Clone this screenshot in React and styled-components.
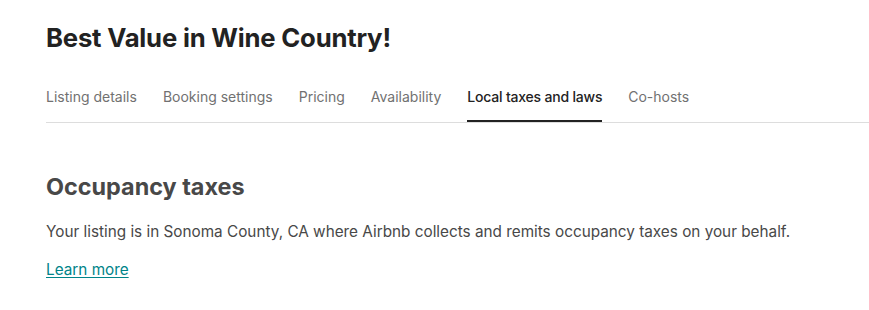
import React from 'react';
import styled, { createGlobalStyle } from 'styled-components';

const GlobalStyle = createGlobalStyle`
  body {
    margin: 0;
    background: #fff;
    font-family: "Inter", "Roboto", sans-serif;
    -webkit-font-smoothing: antialiased;
  }
`;

const Page = styled.div`
  padding: 21px 0 0 46px;
`;

const Title = styled.h1`
  margin: 0;
  font-size: 25.7px;
  line-height: 34px;
  font-weight: 700;
  color: #222222;
  letter-spacing: -0.2px;
`;

const TabBar = styled.nav`
  display: flex;
  gap: 26px;
  margin-top: 33px;
  border-bottom: 1px solid #dddddd;
`;

const Tab = styled.a`
  display: block;
  font-size: 14px;
  line-height: 18px;
  padding-bottom: 14px;
  color: ${p => (p.$active ? '#222222' : '#717171')};
  font-weight: ${p => (p.$active ? 500 : 400)};
  letter-spacing: ${p => (p.$active ? '-0.2px' : '0')};
  border-bottom: 2px solid ${p => (p.$active ? '#222222' : 'transparent')};
  cursor: pointer;
`;

const Section = styled.section`
  padding-top: 49px;
`;

const Heading = styled.h2`
  margin: 0;
  font-size: 23.4px;
  line-height: 30px;
  font-weight: 700;
  color: #484848;
`;

const Body = styled.p`
  margin: 19px 0 0;
  font-size: 15.3px;
  line-height: 22px;
  color: #484848;
`;

const LearnMore = styled.a`
  display: inline-block;
  margin-top: 16px;
  font-size: 15.3px;
  line-height: 22px;
  color: #008489;
  text-decoration: underline;
  text-underline-offset: 2px;
  cursor: pointer;
`;

const tabs = [
  'Listing details',
  'Booking settings',
  'Pricing',
  'Availability',
  'Local taxes and laws',
  'Co-hosts',
];

export default function App() {
  return (
    <>
      <GlobalStyle />
      <Page>
        <Title>Best Value in Wine Country!</Title>
        <TabBar>
          {tabs.map(t => (
            <Tab key={t} $active={t === 'Local taxes and laws'}>
              {t}
            </Tab>
          ))}
        </TabBar>
        <Section>
          <Heading>Occupancy taxes</Heading>
          <Body>
            Your listing is in Sonoma County, CA where Airbnb collects and remits occupancy taxes on your behalf.
          </Body>
          <LearnMore>Learn more</LearnMore>
        </Section>
      </Page>
    </>
  );
}
